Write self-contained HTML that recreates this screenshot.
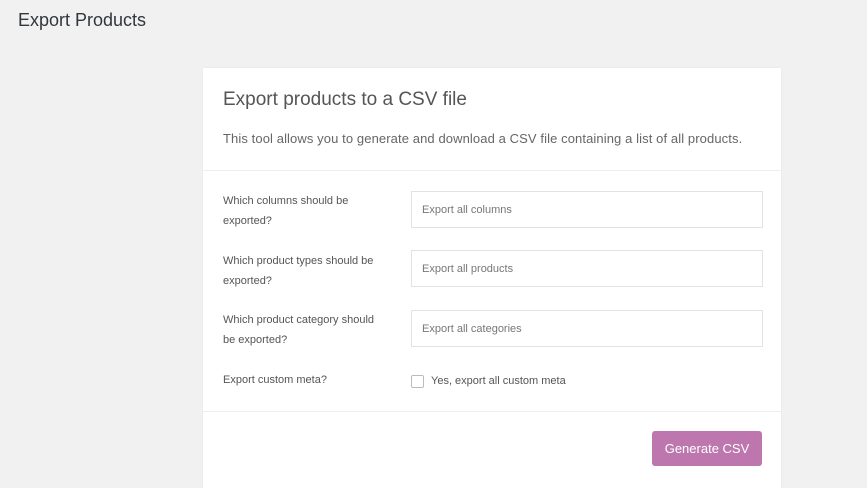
<!DOCTYPE html>
<html><head><style>
body{margin:0;width:867px;height:482px;background:#f1f1f1;font-family:"Liberation Sans",sans-serif;position:relative;overflow:hidden;color:#444}
.a{position:absolute;white-space:nowrap}
.card{position:absolute;left:203px;top:68px;width:578px;height:420px;background:#fff;box-shadow:0 0 2px rgba(0,0,0,.06)}
.hr{position:absolute;left:203px;width:578px;height:1px;background:#eee}
.inp{position:absolute;left:411px;height:35px;border:1px solid #e2e2e2;background:#fff;font-size:11px;color:#777;line-height:37px;padding-left:10px;width:340px}
.lbl{position:absolute;left:223px;font-size:11px;line-height:20px;color:#555}
</style></head><body>
<div class="a" style="left:18px;top:10px;font-size:18px;color:#32373c">Export Products</div>
<div class="card"></div>
<div class="a" style="left:223px;top:89px;font-size:19px;color:#555">Export products to a CSV file</div>
<div class="a" style="left:223px;top:131px;font-size:13px;color:#666;letter-spacing:0.1px">This tool allows you to generate and download a CSV file containing a list of all products.</div>
<div class="hr" style="top:170px"></div>
<div class="lbl" style="top:191px">Which columns should be<br>exported?</div>
<div class="inp" style="top:191px">Export all columns</div>
<div class="lbl" style="top:251px">Which product types should be<br>exported?</div>
<div class="inp" style="top:250px">Export all products</div>
<div class="lbl" style="top:310px">Which product category should<br>be exported?</div>
<div class="inp" style="top:310px">Export all categories</div>
<div class="lbl" style="top:370px">Export custom meta?</div>
<div class="a" style="left:411px;top:375px;width:11px;height:11px;border:1px solid #bbb;border-radius:2px"></div>
<div class="a" style="left:431px;top:372px;font-size:11px;line-height:18px;color:#555">Yes, export all custom meta</div>
<div class="hr" style="top:411px"></div>
<div class="a" style="left:652px;top:431px;width:110px;height:35px;background:#bd77ae;border-radius:3px;color:#fff;font-size:13px;line-height:35px;text-align:center">Generate CSV</div>
</body></html>
